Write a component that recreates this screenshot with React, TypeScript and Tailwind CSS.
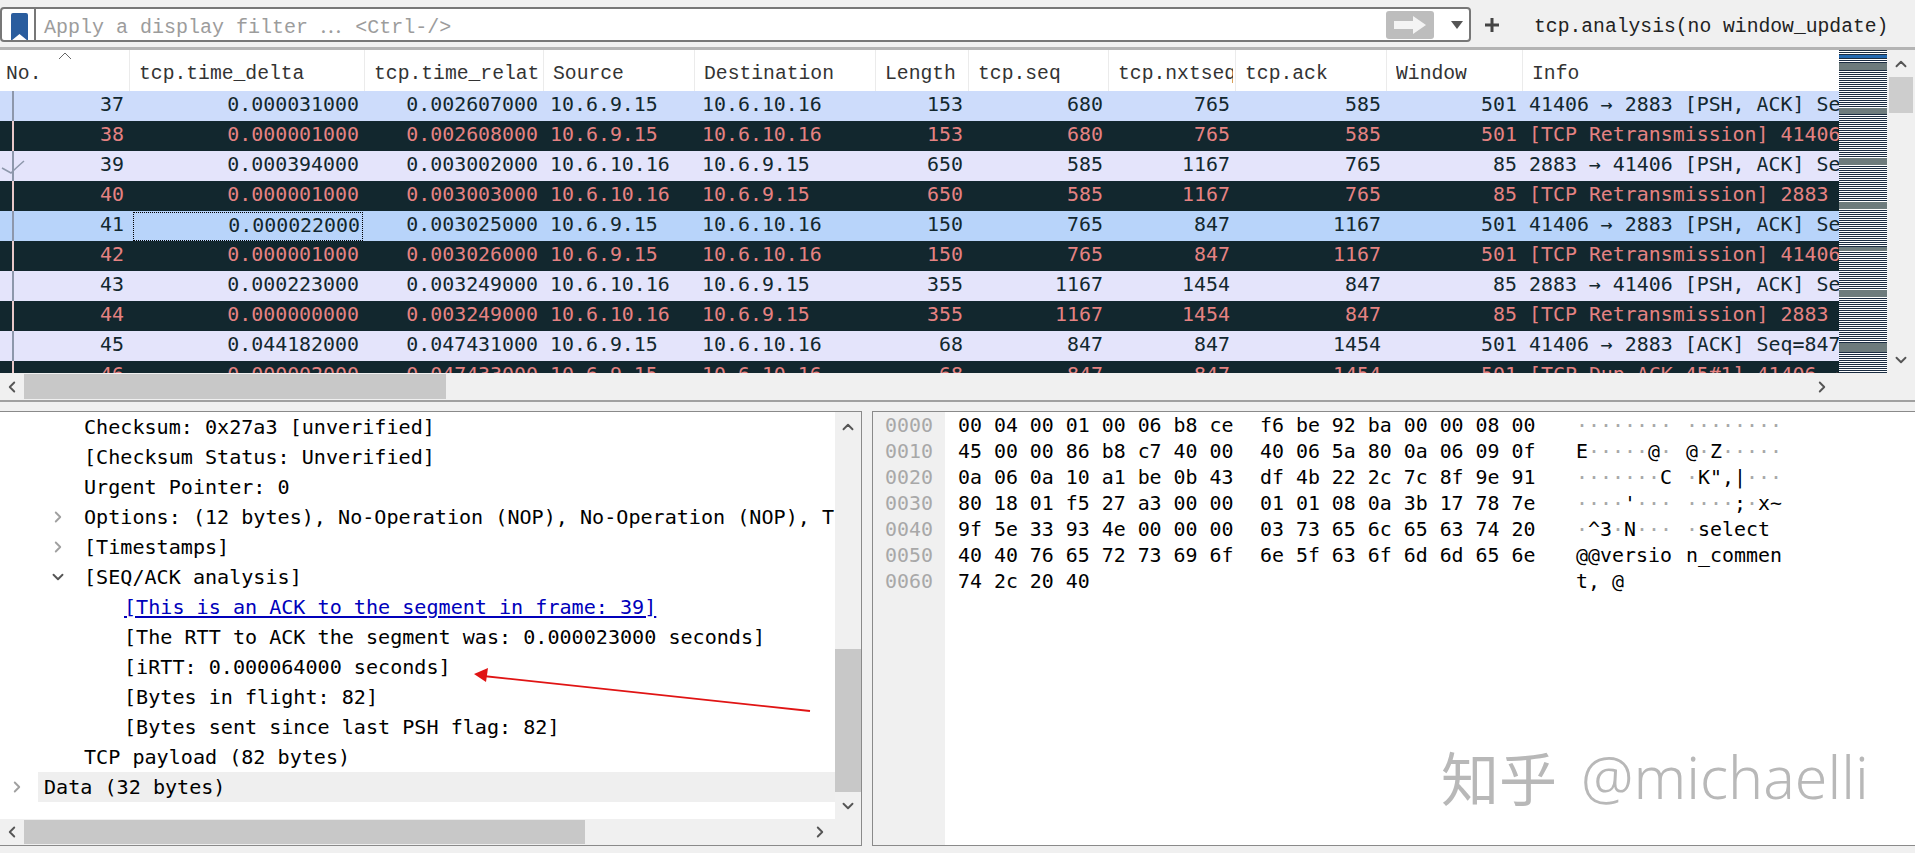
import React from "react";
import { ChevronUp, ChevronDown, ChevronLeft, ChevronRight } from "lucide-react";

const MONO = "font-['DejaVu_Sans_Mono','Liberation_Mono',monospace] text-[19.9px]";
const DETAIL = "font-['DejaVu_Sans_Mono','Liberation_Mono',monospace] text-[20.1px]";
const HEAD = "font-['Liberation_Mono','Noto_Sans_CJK_SC',monospace] text-[19.7px]";

const cols = [
  { w: "w-[130px]", right: true, h: "No." },
  { w: "w-[235px]", right: true, h: "tcp.time_delta" },
  { w: "w-[179px]", right: true, h: "tcp.time_relat" },
  { w: "w-[151px]", right: false, h: "Source" },
  { w: "w-[181px]", right: false, h: "Destination" },
  { w: "w-[93px]", right: true, h: "Length" },
  { w: "w-[140px]", right: true, h: "tcp.seq" },
  { w: "w-[127px]", right: true, h: "tcp.nxtseq" },
  { w: "w-[151px]", right: true, h: "tcp.ack" },
  { w: "w-[136px]", right: true, h: "Window" },
  { w: "w-[316px]", right: false, h: "Info" },
];

type Kind = "blue" | "dark" | "lav" | "sel";
const A = "10.6.9.15";
const B = "10.6.10.16";
const rows: { k: Kind; c: string[] }[] = [
  { k: "blue", c: ["37", "0.000031000", "0.002607000", A, B, "153", "680", "765", "585", "501", "41406 → 2883 [PSH, ACK] Seq=680 Ack=585"] },
  { k: "dark", c: ["38", "0.000001000", "0.002608000", A, B, "153", "680", "765", "585", "501", "[TCP Retransmission] 41406 → 2883"] },
  { k: "lav", c: ["39", "0.000394000", "0.003002000", B, A, "650", "585", "1167", "765", "85", "2883 → 41406 [PSH, ACK] Seq=585 Ack=765"] },
  { k: "dark", c: ["40", "0.000001000", "0.003003000", B, A, "650", "585", "1167", "765", "85", "[TCP Retransmission] 2883 → 41406"] },
  { k: "sel", c: ["41", "0.000022000", "0.003025000", A, B, "150", "765", "847", "1167", "501", "41406 → 2883 [PSH, ACK] Seq=765 Ack=1167"] },
  { k: "dark", c: ["42", "0.000001000", "0.003026000", A, B, "150", "765", "847", "1167", "501", "[TCP Retransmission] 41406 → 2883"] },
  { k: "lav", c: ["43", "0.000223000", "0.003249000", B, A, "355", "1167", "1454", "847", "85", "2883 → 41406 [PSH, ACK] Seq=1167 Ack=847"] },
  { k: "dark", c: ["44", "0.000000000", "0.003249000", B, A, "355", "1167", "1454", "847", "85", "[TCP Retransmission] 2883 → 41406"] },
  { k: "lav", c: ["45", "0.044182000", "0.047431000", A, B, "68", "847", "847", "1454", "501", "41406 → 2883 [ACK] Seq=847 Ack=1454"] },
  { k: "dark", c: ["46", "0.000002000", "0.047433000", A, B, "68", "847", "847", "1454", "501", "[TCP Dup ACK 45#1] 41406 → 2883"] },
];

const rowStyle: Record<Kind, string> = {
  blue: "bg-[#cddcfb] text-[#12272e]",
  dark: "bg-[#12272e] text-[#e58282]",
  lav: "bg-[#e4e4fb] text-[#12272e]",
  sel: "bg-[#b8d4fa] text-[#12272e]",
};

const hex: [string, string, string, string, string][] = [
  ["0000", "00 04 00 01 00 06 b8 ce", "f6 be 92 ba 00 00 08 00", "········", "········"],
  ["0010", "45 00 00 86 b8 c7 40 00", "40 06 5a 80 0a 06 09 0f", "E·····@·", "@·Z·····"],
  ["0020", "0a 06 0a 10 a1 be 0b 43", "df 4b 22 2c 7c 8f 9e 91", "·······C", "·K\",|···"],
  ["0030", "80 18 01 f5 27 a3 00 00", "01 01 08 0a 3b 17 78 7e", "····'···", "····;·x~"],
  ["0040", "9f 5e 33 93 4e 00 00 00", "03 73 65 6c 65 63 74 20", "·^3·N···", "·select "],
  ["0050", "40 40 76 65 72 73 69 6f", "6e 5f 63 6f 6d 6d 65 6e", "@@versio", "n_commen"],
  ["0060", "74 2c 20 40", "", "t, @", ""],
];

function Ascii({ s }: { s: string }) {
  return (
    <>
      {s.split("").map((ch, i) => (
        <span key={i} className={ch === "·" ? "text-[#a8a8a8]" : ""}>{ch}</span>
      ))}
    </>
  );
}

function Minimap() {
  const bands = [
    [63, 7], [108, 6], [158, 7], [202, 7], [247, 4], [290, 7], [343, 9],
  ];
  return (
    <svg width="48" height="323" className="block shrink-0">
      <defs>
        <pattern id="st" width="2" height="2" patternUnits="userSpaceOnUse">
          <rect width="2" height="1" fill="#1b2d42" />
          <rect y="1" width="2" height="1" fill="#ffffff" />
        </pattern>
      </defs>
      <rect width="48" height="323" fill="url(#st)" />
      {bands.map(([y, h]) => (
        <rect key={y} x="0" y={y - 50} width="48" height={h} fill="#6d7b7c" />
      ))}
      <rect x="0" y="5" width="48" height="3" fill="#2168b0" />
    </svg>
  );
}

function Row({ k, c }: { k: Kind; c: string[] }) {
  return (
    <div className={`relative flex h-[30px] items-center whitespace-nowrap ${MONO} ${rowStyle[k]}`}>
      <span className={`absolute left-[12px] top-0 h-full w-[2px] ${k === "dark" ? "bg-[#e8c8c8]" : "bg-[#8d97ab]"}`} />
      {c.map((t, i) => {
        const col = cols[i];
        if (k === "sel" && i === 1) {
          return (
            <div key={i} className="ml-[3px] mr-[2px] flex h-[29px] w-[230px] shrink-0 items-center justify-end border border-dotted border-black pb-[1px] pr-[2px]">
              {t}
            </div>
          );
        }
        return (
          <div key={i} className={`${col.w} shrink-0 overflow-hidden pb-[2px] ${col.right ? "pr-[6px] text-right" : i === 4 ? "pl-[7px]" : "pl-[6px]"}`}>
            {t}
          </div>
        );
      })}
      {c[0] === "39" && (
        <svg width="26" height="16" className="absolute left-0 top-[8px]">
          <path d="M2 9 L11 14 Q16 9 24 2" fill="none" stroke="#8d97ab" strokeWidth="1.5" />
        </svg>
      )}
    </div>
  );
}

const detail: { t: string; x: "a" | "b"; ch?: "r" | "d"; link?: boolean }[] = [
  { t: "Checksum: 0x27a3 [unverified]", x: "a" },
  { t: "[Checksum Status: Unverified]", x: "a" },
  { t: "Urgent Pointer: 0", x: "a" },
  { t: "Options: (12 bytes), No-Operation (NOP), No-Operation (NOP), Timestamps", x: "a", ch: "r" },
  { t: "[Timestamps]", x: "a", ch: "r" },
  { t: "[SEQ/ACK analysis]", x: "a", ch: "d" },
  { t: "[This is an ACK to the segment in frame: 39]", x: "b", link: true },
  { t: "[The RTT to ACK the segment was: 0.000023000 seconds]", x: "b" },
  { t: "[iRTT: 0.000064000 seconds]", x: "b" },
  { t: "[Bytes in flight: 82]", x: "b" },
  { t: "[Bytes sent since last PSH flag: 82]", x: "b" },
  { t: "TCP payload (82 bytes)", x: "a" },
];

export default function App() {
  return (
    <div className="relative flex h-[853px] w-[1915px] flex-col overflow-hidden bg-[#f0f0f0] text-black">
      {/* Filter toolbar */}
      <div className="flex h-[47px] shrink-0 items-start pt-[7px]">
        <div className="flex h-[35px] w-[1471px] shrink-0 items-center rounded-[4px] border-2 border-[#777] bg-white">
          <svg width="34" height="31" className="shrink-0 border-r-2 border-[#777]">
            <path d="M9 6 Q9 4 11 4 L24 4 Q26 4 26 6 L26 32 L17.5 25 L9 32 Z" fill="#2a5d9e" />
          </svg>
          <span className="ml-[8px] whitespace-pre pt-[6px] font-['Liberation_Mono','Noto_Sans_CJK_SC',monospace] text-[20px] text-[#9c9c9c]">Apply a display filter ⋯ <span className="ml-[2px]">&lt;Ctrl-/&gt;</span></span>
          <div className="ml-auto mr-[35px] flex h-[28px] w-[48px] items-center justify-center rounded-[3px] bg-[#bdbdbd]">
            <svg width="38" height="22">
              <path d="M3 7 H22 V2 L35 11 L22 20 V15 H3 Z" fill="#f4f4f4" />
            </svg>
          </div>
          <svg width="12" height="8" className="absolute left-[1451px] top-[21px]">
            <path d="M0 0 H12 L6 8 Z" fill="#555" />
          </svg>
        </div>
        <svg width="14" height="14" className="ml-[14px] mt-[11px] shrink-0">
          <path d="M5.5 0 H8.5 V5.5 H14 V8.5 H8.5 V14 H5.5 V8.5 H0 V5.5 H5.5 Z" fill="#444" />
        </svg>
        <span className={`ml-[35px] mt-[6px] whitespace-nowrap ${HEAD} text-[#222]`}>tcp.analysis(no window_update)</span>
      </div>
      <div className="h-[3px] shrink-0 bg-[#b4b4b4]" />

      {/* Packet list */}
      <div className="flex h-[323px] shrink-0">
        <div className="w-[1839px] shrink-0 overflow-hidden">
          <div className={`relative flex h-[41px] items-center whitespace-nowrap bg-white ${HEAD} text-[#333]`}>
            {cols.map((c, i) => (
              <div key={i} className={`${c.w} flex h-full shrink-0 items-center border-r border-[#ebebeb] pt-[9px] pr-[2px] ${i === 0 ? "pl-[6px]" : "pl-[9px]"} ${i === 10 ? "border-r-0" : ""}`}>
                <div className="min-w-0 flex-1 overflow-hidden">{c.h}</div>
              </div>
            ))}
            <svg width="14" height="8" className="absolute left-[58px] top-[2px]">
              <path d="M1 7 L7 1 L13 7" fill="none" stroke="#666" strokeWidth="1" />
            </svg>
          </div>
          {rows.map((r) => (
            <Row key={r.c[0]} k={r.k} c={r.c} />
          ))}
        </div>
        <Minimap />
        <div className="flex w-[28px] shrink-0 flex-col items-center">
          <div className="flex h-[27px] w-full items-center justify-center">
            <ChevronUp size={18} strokeWidth={2.5} className="text-[#555]" />
          </div>
          <div className="h-[36px] w-[24px] bg-[#cdcdcd]" />
          <div className="flex w-full flex-1 items-end justify-center pb-[4px]">
            <ChevronDown size={18} strokeWidth={2.5} className="text-[#555]" />
          </div>
        </div>
      </div>

      {/* Horizontal scrollbar */}
      <div className="flex h-[27px] shrink-0 items-center">
        <div className="flex w-[24px] justify-center"><ChevronLeft size={18} strokeWidth={2.5} className="text-[#555]" /></div>
        <div className="h-[25px] w-[422px] bg-[#c8c8c8]" />
        <div className="ml-[1367px]"><ChevronRight size={18} strokeWidth={2.5} className="text-[#555]" /></div>
      </div>
      <div className="h-[11px] shrink-0 border-t-2 border-[#a0a0a0]" />

      {/* Panes */}
      <div className="flex h-[435px] shrink-0 justify-between">
        {/* Details */}
        <div className="flex w-[862px] shrink-0 flex-col border-y border-r border-[#8a8a8a] bg-white">
          <div className="flex min-h-0 flex-1">
            <div className={`min-w-0 flex-1 overflow-hidden whitespace-nowrap ${DETAIL}`}>
              {detail.map((d, i) => (
                <div key={i} className={`relative flex h-[30px] items-center ${d.x === "a" ? "pl-[84px]" : "pl-[124px]"}`}>
                  {d.ch === "r" && <ChevronRight size={18} strokeWidth={2.5} className="absolute left-[49px] top-[6px] text-[#a0a0a0]" />}
                  {d.ch === "d" && <ChevronDown size={18} strokeWidth={2.5} className="absolute left-[49px] top-[6px] text-[#555]" />}
                  <span className={d.link ? "text-[#0000bb] underline" : ""}>{d.t}</span>
                </div>
              ))}
              <div className="relative ml-[38px] flex h-[30px] items-center bg-[#efefef] pl-[6px]">
                <ChevronRight size={18} strokeWidth={2.5} className="absolute left-[-30px] top-[6px] text-[#a0a0a0]" />
                Data (32 bytes)
              </div>
            </div>
            <div className="flex w-[26px] shrink-0 flex-col bg-[#f0f0f0]">
              <div className="flex h-[237px] justify-center pt-[6px]">
                <ChevronUp size={18} strokeWidth={2.5} className="text-[#555]" />
              </div>
              <div className="h-[143px] w-full bg-[#c8c8c8]" />
              <div className="flex flex-1 items-center justify-center">
                <ChevronDown size={18} strokeWidth={2.5} className="text-[#555]" />
              </div>
            </div>
          </div>
          <div className="flex h-[26px] shrink-0 items-center bg-[#f0f0f0]">
            <div className="flex w-[24px] justify-center"><ChevronLeft size={18} strokeWidth={2.5} className="text-[#555]" /></div>
            <div className="h-[24px] w-[561px] bg-[#c8c8c8]" />
            <div className="ml-[226px]"><ChevronRight size={18} strokeWidth={2.5} className="text-[#555]" /></div>
          </div>
        </div>

        {/* Bytes */}
        <div className="flex w-[1043px] shrink-0 border-y border-l border-[#8a8a8a] bg-white">
          <div className={`w-[72px] shrink-0 bg-[#f0f0f0] pl-[12px] pt-[1px] ${MONO} text-[#a8a8a8]`}>
            {hex.map((h) => (
              <div key={h[0]} className="flex h-[26px] items-center">{h[0]}</div>
            ))}
          </div>
          <div className={`flex-1 pt-[1px] pl-[13px] whitespace-pre ${MONO}`}>
            {hex.map((h) => (
              <div key={h[0]} className="flex h-[26px] items-center">
                <span className="w-[302px] shrink-0">{h[1]}</span>
                <span className="w-[316px] shrink-0">{h[2]}</span>
                <span className="w-[110px] shrink-0"><Ascii s={h[3]} /></span>
                <span className="shrink-0"><Ascii s={h[4]} /></span>
              </div>
            ))}
          </div>
        </div>
      </div>
      <div className="flex-1" />

      {/* Annotation arrow over the details pane */}
      <svg width="360" height="60" className="pointer-events-none absolute left-[463px] top-[664px]">
        <line x1="347" y1="47" x2="20" y2="12" stroke="#e01414" strokeWidth="1.8" />
        <path d="M11 10 L25 4 L23 18 Z" fill="#e01414" />
      </svg>

      {/* Watermark */}
      <div className="pointer-events-none absolute left-[1441px] top-[732px] flex items-center whitespace-nowrap text-[#b8b8b8]">
        <span className="font-['Noto_Sans_CJK_SC',sans-serif] text-[58px]">知乎</span>
        <span className="ml-[24px] font-['Noto_Sans',sans-serif] text-[59px] font-light">@michaelli</span>
      </div>
    </div>
  );
}
